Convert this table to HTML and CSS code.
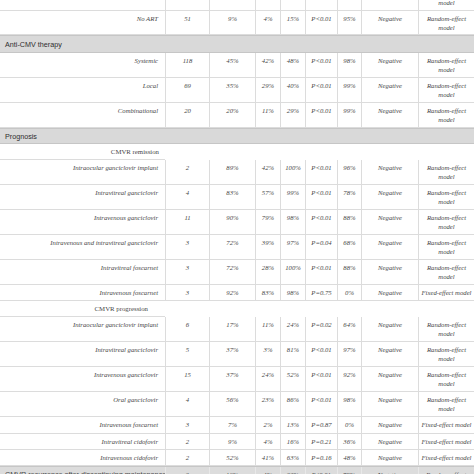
FILE: index.html
```html
<!DOCTYPE html>
<html>
<head>
<meta charset="utf-8">
<link rel="stylesheet" href="styles.css">
</head>
<body>
<div class="table">
  <div class="row h25">
    <div class="c lab"></div><div class="c"></div><div class="c"></div><div class="c"></div><div class="c"></div><div class="c"></div><div class="c"></div><div class="c"></div><div class="c">Random-effect<br>model</div>
  </div>
  <div class="row h24">
    <div class="c lab">No ART</div><div class="c">51</div><div class="c">9%</div><div class="c">4%</div><div class="c">15%</div><div class="c">P&lt;0.01</div><div class="c">95%</div><div class="c">Negative</div><div class="c">Random-effect<br>model</div>
  </div>
  <div class="group h18">Anti-CMV therapy</div>
  <div class="row h25">
    <div class="c lab">Systemic</div><div class="c">118</div><div class="c">45%</div><div class="c">42%</div><div class="c">48%</div><div class="c">P&lt;0.01</div><div class="c">98%</div><div class="c">Negative</div><div class="c">Random-effect<br>model</div>
  </div>
  <div class="row h25">
    <div class="c lab">Local</div><div class="c">69</div><div class="c">35%</div><div class="c">29%</div><div class="c">40%</div><div class="c">P&lt;0.01</div><div class="c">99%</div><div class="c">Negative</div><div class="c">Random-effect<br>model</div>
  </div>
  <div class="row h25">
    <div class="c lab">Combinational</div><div class="c">20</div><div class="c">20%</div><div class="c">11%</div><div class="c">29%</div><div class="c">P&lt;0.01</div><div class="c">99%</div><div class="c">Negative</div><div class="c">Random-effect<br>model</div>
  </div>
  <div class="group h16">Prognosis</div>
  <div class="sub h16"><span class="sub-text">CMVR remission</span></div>
  <div class="row h25">
    <div class="c lab">Intraocular ganciclovir implant</div><div class="c">2</div><div class="c">89%</div><div class="c">42%</div><div class="c">100%</div><div class="c">P&lt;0.01</div><div class="c">96%</div><div class="c">Negative</div><div class="c">Random-effect<br>model</div>
  </div>
  <div class="row h25">
    <div class="c lab">Intravitreal ganciclovir</div><div class="c">4</div><div class="c">83%</div><div class="c">57%</div><div class="c">99%</div><div class="c">P&lt;0.01</div><div class="c">78%</div><div class="c">Negative</div><div class="c">Random-effect<br>model</div>
  </div>
  <div class="row h25">
    <div class="c lab">Intravenous ganciclovir</div><div class="c">11</div><div class="c">90%</div><div class="c">79%</div><div class="c">98%</div><div class="c">P&lt;0.01</div><div class="c">88%</div><div class="c">Negative</div><div class="c">Random-effect<br>model</div>
  </div>
  <div class="row h25">
    <div class="c lab">Intravenous and intravitreal ganciclovir</div><div class="c">3</div><div class="c">72%</div><div class="c">39%</div><div class="c">97%</div><div class="c">P=0.04</div><div class="c">68%</div><div class="c">Negative</div><div class="c">Random-effect<br>model</div>
  </div>
  <div class="row h25">
    <div class="c lab">Intravitreal foscarnet</div><div class="c">3</div><div class="c">72%</div><div class="c">28%</div><div class="c">100%</div><div class="c">P&lt;0.01</div><div class="c">88%</div><div class="c">Negative</div><div class="c">Random-effect<br>model</div>
  </div>
  <div class="row h16">
    <div class="c lab">Intravenous foscarnet</div><div class="c">3</div><div class="c">92%</div><div class="c">83%</div><div class="c">98%</div><div class="c">P=0.75</div><div class="c">0%</div><div class="c">Negative</div><div class="c nw">Fixed-effect model</div>
  </div>
  <div class="sub h16"><span class="sub-text prog">CMVR progression</span></div>
  <div class="row h25">
    <div class="c lab">Intraocular ganciclovir implant</div><div class="c">6</div><div class="c">17%</div><div class="c">11%</div><div class="c">24%</div><div class="c">P=0.02</div><div class="c">64%</div><div class="c">Negative</div><div class="c">Random-effect<br>model</div>
  </div>
  <div class="row h25">
    <div class="c lab">Intravitreal ganciclovir</div><div class="c">5</div><div class="c">37%</div><div class="c">3%</div><div class="c">81%</div><div class="c">P&lt;0.01</div><div class="c">97%</div><div class="c">Negative</div><div class="c">Random-effect<br>model</div>
  </div>
  <div class="row h25">
    <div class="c lab">Intravenous ganciclovir</div><div class="c">15</div><div class="c">37%</div><div class="c">24%</div><div class="c">52%</div><div class="c">P&lt;0.01</div><div class="c">92%</div><div class="c">Negative</div><div class="c">Random-effect<br>model</div>
  </div>
  <div class="row h25">
    <div class="c lab">Oral ganciclovir</div><div class="c">4</div><div class="c">56%</div><div class="c">23%</div><div class="c">86%</div><div class="c">P&lt;0.01</div><div class="c">98%</div><div class="c">Negative</div><div class="c">Random-effect<br>model</div>
  </div>
  <div class="row h17">
    <div class="c lab">Intravenous foscarnet</div><div class="c">3</div><div class="c">7%</div><div class="c">2%</div><div class="c">13%</div><div class="c">P=0.87</div><div class="c">0%</div><div class="c">Negative</div><div class="c nw">Fixed-effect model</div>
  </div>
  <div class="row h16">
    <div class="c lab">Intravitreal cidofovir</div><div class="c">2</div><div class="c">9%</div><div class="c">4%</div><div class="c">16%</div><div class="c">P=0.21</div><div class="c">36%</div><div class="c">Negative</div><div class="c nw">Fixed-effect model</div>
  </div>
  <div class="row h16">
    <div class="c lab">Intravenous cidofovir</div><div class="c">2</div><div class="c">52%</div><div class="c">41%</div><div class="c">63%</div><div class="c">P=0.16</div><div class="c">48%</div><div class="c">Negative</div><div class="c nw">Fixed-effect model</div>
  </div>
  <div class="row h25 shaded">
    <div class="c lab sans">CMVR recurrence after discontinuing maintenance</div><div class="c up">3</div><div class="c up">16%</div><div class="c up">4%</div><div class="c up">33%</div><div class="c up">P&lt;0.01</div><div class="c up">79%</div><div class="c up">Negative</div><div class="c up">Random-effect<br>model</div>
  </div>
</div>
</body>
</html>
```

FILE: styles.css
```css
html, body {
  margin: 0;
  padding: 0;
  background: #ffffff;
  overflow: hidden;
}

.table {
  width: 474px;
  margin-top: -14px;
  font-family: "Liberation Serif", "Times New Roman", serif;
  font-style: italic;
  font-size: 6.7px;
  line-height: 9px;
  color: #474747;
}

.row {
  display: grid;
  grid-template-columns: 165px 44px 46px 25px 25px 32px 24px 57px 56px;
  box-sizing: border-box;
  border-bottom: 1px solid #dcdcdc;
}

.h25 { height: 25px; }
.h24 { height: 24px; }
.h18 { height: 18px; }
.h17 { height: 17px; }
.h16 { height: 16px; }

.c {
  padding: 3px 0 0;
  text-align: center;
  border-left: 1px solid #dcdcdc;
  overflow: hidden;
}

.c.lab {
  border-left: none;
  text-align: right;
  padding-right: 7px;
  white-space: nowrap;
}

.nw {
  white-space: nowrap;
}

.group {
  box-sizing: border-box;
  display: flex;
  align-items: center;
  padding-left: 5px;
  background: #d9d9d9;
  border-top: 1px solid #c6c6c6;
  border-bottom: 1px solid #c6c6c6;
  font-family: "Liberation Sans", Arial, sans-serif;
  font-style: normal;
  font-size: 7.2px;
  color: #2e2e2e;
}

.sub {
  box-sizing: border-box;
  display: flex;
  align-items: center;
  border-bottom: 1px solid #dcdcdc;
  width: 165px;
  justify-content: flex-end;
}

.sub-text {
  font-style: normal;
  font-size: 6.8px;
  padding-right: 6px;
}

.sub-text.prog {
  padding-right: 17px;
}

.shaded {
  background: #dcdcdc;
  border-top: 1px solid #c6c6c6;
}

.shaded .c {
  border-left-color: #e8e8e8;
}

.shaded .c.lab {
  text-align: left;
  padding-left: 5px;
}

.sans {
  font-family: "Liberation Sans", Arial, sans-serif;
  font-style: normal;
  font-size: 7.2px;
}

.up {
  font-style: normal;
}
```
